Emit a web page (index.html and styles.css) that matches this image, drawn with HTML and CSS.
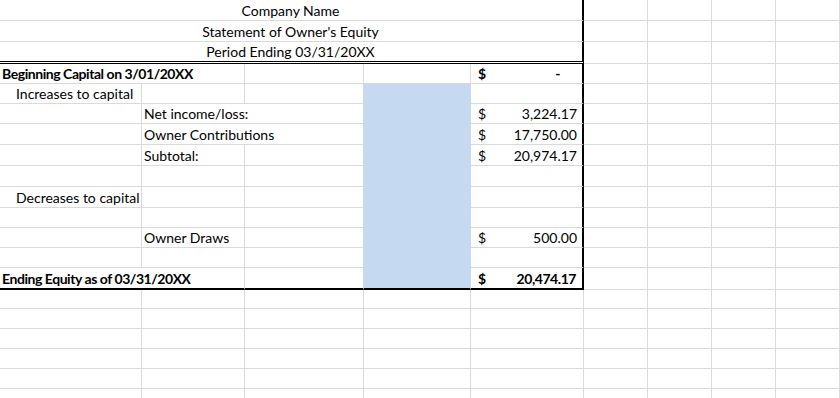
FILE: index.html
```html
<!DOCTYPE html>
<html>
<head>
<meta charset="utf-8">
<link rel="stylesheet" href="styles.css">
<title>Statement of Owner's Equity</title>
</head>
<body>
<div class="sheet">
  <!-- row 0 -->
  <div class="c hdr edge">Company Name</div>
  <div class="c"></div><div class="c"></div><div class="c"></div><div class="c"></div>
  <!-- row 1 -->
  <div class="c hdr edge">Statement of Owner's Equity</div>
  <div class="c"></div><div class="c"></div><div class="c"></div><div class="c"></div>
  <!-- row 2 -->
  <div class="c hdr edge dbl">Period Ending 03/31/20XX</div>
  <div class="c"></div><div class="c"></div><div class="c"></div><div class="c"></div>
  <!-- row 3 -->
  <div class="c span2 bold">Beginning Capital on 3/01/20XX</div>
  <div class="c"></div>
  <div class="c"></div>
  <div class="c acct bold edge"><span>$</span><span class="zero">-</span></div>
  <div class="c"></div><div class="c"></div><div class="c"></div><div class="c"></div>
  <!-- row 4 -->
  <div class="c indent">Increases to capital</div>
  <div class="c"></div>
  <div class="c bl"></div>
  <div class="c blue"></div>
  <div class="c acct edge"></div>
  <div class="c"></div><div class="c"></div><div class="c"></div><div class="c"></div>
  <!-- row 5 -->
  <div class="c"></div>
  <div class="c span2 bl">Net income/loss:</div>
  <div class="c blue"></div>
  <div class="c acct edge"><span>$</span><span>3,224.17</span></div>
  <div class="c"></div><div class="c"></div><div class="c"></div><div class="c"></div>
  <!-- row 6 -->
  <div class="c"></div>
  <div class="c span2 bl">Owner Contributions</div>
  <div class="c blue"></div>
  <div class="c acct edge"><span>$</span><span>17,750.00</span></div>
  <div class="c"></div><div class="c"></div><div class="c"></div><div class="c"></div>
  <!-- row 7 -->
  <div class="c"></div>
  <div class="c">Subtotal:</div>
  <div class="c bl"></div>
  <div class="c blue"></div>
  <div class="c acct edge"><span>$</span><span>20,974.17</span></div>
  <div class="c"></div><div class="c"></div><div class="c"></div><div class="c"></div>
  <!-- row 8 -->
  <div class="c"></div>
  <div class="c"></div>
  <div class="c bl"></div>
  <div class="c blue"></div>
  <div class="c acct edge"></div>
  <div class="c"></div><div class="c"></div><div class="c"></div><div class="c"></div>
  <!-- row 9 -->
  <div class="c indent">Decreases to capital</div>
  <div class="c"></div>
  <div class="c bl"></div>
  <div class="c blue"></div>
  <div class="c acct edge"></div>
  <div class="c"></div><div class="c"></div><div class="c"></div><div class="c"></div>
  <!-- row 10 -->
  <div class="c"></div>
  <div class="c"></div>
  <div class="c bl"></div>
  <div class="c blue"></div>
  <div class="c acct edge"></div>
  <div class="c"></div><div class="c"></div><div class="c"></div><div class="c"></div>
  <!-- row 11 -->
  <div class="c"></div>
  <div class="c">Owner Draws</div>
  <div class="c bl"></div>
  <div class="c blue"></div>
  <div class="c acct edge"><span>$</span><span>500.00</span></div>
  <div class="c"></div><div class="c"></div><div class="c"></div><div class="c"></div>
  <!-- row 12 -->
  <div class="c"></div>
  <div class="c"></div>
  <div class="c bl"></div>
  <div class="c blue"></div>
  <div class="c acct edge"></div>
  <div class="c"></div><div class="c"></div><div class="c"></div><div class="c"></div>
  <!-- row 13 -->
  <div class="c span2 bold thick">Ending Equity as of 03/31/20XX</div>
  <div class="c bl thick"></div>
  <div class="c blue thick"></div>
  <div class="c acct bold edge thick"><span>$</span><span>20,474.17</span></div>
  <div class="c"></div><div class="c"></div><div class="c"></div><div class="c"></div>
  <!-- rows 14-19 -->
  <div class="c"></div><div class="c"></div><div class="c"></div><div class="c"></div><div class="c"></div><div class="c"></div><div class="c"></div><div class="c"></div><div class="c"></div>
  <div class="c"></div><div class="c"></div><div class="c"></div><div class="c"></div><div class="c"></div><div class="c"></div><div class="c"></div><div class="c"></div><div class="c"></div>
  <div class="c"></div><div class="c"></div><div class="c"></div><div class="c"></div><div class="c"></div><div class="c"></div><div class="c"></div><div class="c"></div><div class="c"></div>
  <div class="c"></div><div class="c"></div><div class="c"></div><div class="c"></div><div class="c"></div><div class="c"></div><div class="c"></div><div class="c"></div><div class="c"></div>
  <div class="c"></div><div class="c"></div><div class="c"></div><div class="c"></div><div class="c"></div><div class="c"></div><div class="c"></div><div class="c"></div><div class="c"></div>
  <div class="c"></div><div class="c"></div><div class="c"></div><div class="c"></div><div class="c"></div><div class="c"></div><div class="c"></div><div class="c"></div><div class="c"></div>
</div>
</body>
</html>
```

FILE: styles.css
```css
html, body {
  margin: 0;
  padding: 0;
  background: #ffffff;
  overflow: hidden;
}

.sheet {
  display: grid;
  width: 840px;
  grid-template-columns: 142px 103px 119px 107px 113px 64px 64px 64px 64px;
  grid-template-rows: 21px 21px 22px 20px 20px 20px 21px 21px 21px 21px 20px 20px 20px 22px 19px 20px 20px 20px 20px 20px;
  font-family: Lato, "Liberation Sans", sans-serif;
  font-size: 14px;
  line-height: 16px;
  color: #000000;
}

.c {
  box-sizing: border-box;
  display: flex;
  align-items: flex-end;
  padding: 0 3px 1px 2px;
  border-right: 1px solid #dadada;
  border-bottom: 1px solid #dadada;
  white-space: nowrap;
  min-width: 0;
}

.hdr {
  grid-column: span 5;
  justify-content: center;
}

.span2 {
  grid-column: span 2;
}

.edge {
  border-right: 2px solid #000000;
}

.dbl {
  border-bottom: 3px double #000000;
}

.thick {
  border-bottom: 2px solid #000000;
}

.bold {
  font-weight: 700;
  letter-spacing: -0.45px;
}

.indent {
  padding-left: 16px;
}

.blue {
  background: #c5d9f1;
  border-right-color: #c5d9f1;
  border-bottom-color: #c5d9f1;
}

.blue.thick {
  border-bottom-color: #000000;
}

.bl {
  border-right-color: #c5d9f1;
}

.acct {
  justify-content: space-between;
  padding-left: 7px;
  padding-right: 5px;
}

.acct.bold {
  padding-right: 6px;
}

.zero {
  padding-right: 16px;
}
```
